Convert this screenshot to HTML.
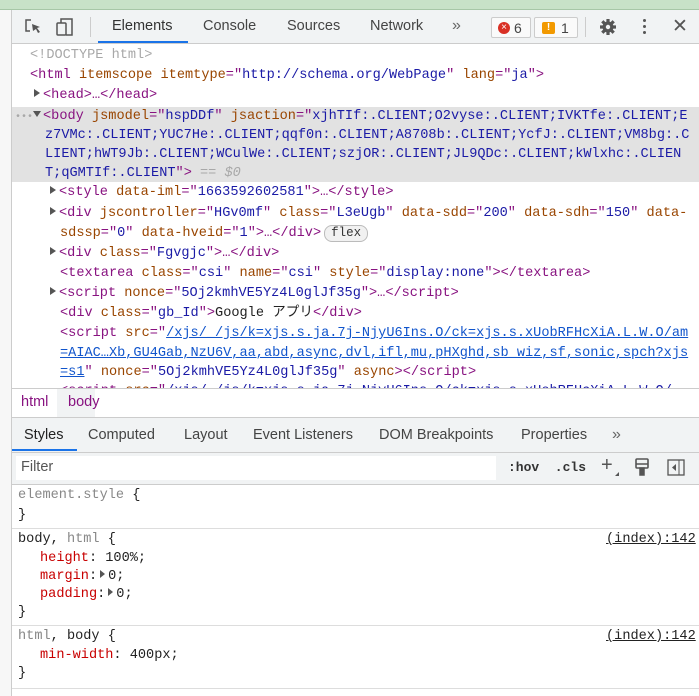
<!DOCTYPE html>
<html><head><meta charset="utf-8"><style>
*{margin:0;padding:0;box-sizing:border-box}
body{width:699px;height:696px;overflow:hidden;background:#fff;position:relative;font-family:"Liberation Sans","Noto Sans CJK JP",sans-serif}
.abs{position:absolute}
.mono{font-family:"Liberation Mono","Noto Sans CJK JP",monospace;font-size:13.6px;white-space:pre;color:#881280}
.t{color:#881280}.a{color:#994500}.v{color:#1a1aa6}.g{color:#a8a8a8}.k{color:#222}
.l{position:absolute;line-height:19.6px;height:19.6px}
.tri{display:inline-block;width:0;height:0;border-left:6px solid #555;border-top:4px solid transparent;border-bottom:4px solid transparent;margin-right:3px;vertical-align:1px}
.trid{display:inline-block;width:0;height:0;border-top:6px solid #555;border-left:4px solid transparent;border-right:4px solid transparent;margin-right:2px;vertical-align:2px}
.tab{position:absolute;font-size:14.5px;color:#333;top:0}
.u{text-decoration:underline}
</style></head><body>
<div class="abs" style="left:0;top:0;width:699px;height:10px;background:#c8e2c8;border-bottom:1px solid #a7c7a7"></div>
<div class="abs" style="left:0;top:10px;width:12px;height:686px;background:#f7f7f7;border-right:1px solid #ccc"></div>
<!-- toolbar -->
<div class="abs" style="left:12px;top:10px;width:687px;height:34px;background:#f1f3f4;border-bottom:1px solid #ccc">
 <svg class="abs" style="left:12px;top:8px" width="18" height="18" viewBox="0 0 18 18"><path d="M7 2H2v11h4" fill="none" stroke="#555" stroke-width="1.5"/><path d="M8 6l8 3-3 1 3 4-2 1-2-4-3 2z" fill="#555"/></svg>
 <svg class="abs" style="left:44px;top:7px" width="18" height="20" viewBox="0 0 18 20"><rect x="1" y="6" width="9" height="12" rx="1" fill="none" stroke="#555" stroke-width="1.5"/><path d="M5 6V2h11v16h-6" fill="none" stroke="#555" stroke-width="1.5"/></svg>
 <div class="abs" style="left:78px;top:7px;width:1px;height:20px;background:#ccc"></div>
 <div class="tab" style="left:100px;top:8px">Elements</div>
 <div class="abs" style="left:86px;top:31px;width:90px;height:2px;background:#1a73e8"></div>
 <div class="tab" style="left:191px;top:8px;color:#444">Console</div>
 <div class="tab" style="left:275px;top:8px;color:#444">Sources</div>
 <div class="tab" style="left:358px;top:8px;color:#444">Network</div>
 <div class="tab" style="left:440px;top:7px;color:#666;font-size:16px">»</div>
 <div class="abs" style="left:479px;top:7px;width:40px;height:21px;border:1px solid #ccc;border-radius:2px;background:#fafafa"><span class="abs" style="left:6px;top:4px;width:12px;height:12px;border-radius:6px;background:#d93025;color:#fff;font-size:10px;text-align:center;line-height:12px">×</span><span class="abs" style="left:22px;top:2px;font-size:14px;color:#444">6</span></div>
 <div class="abs" style="left:522px;top:7px;width:44px;height:21px;border:1px solid #ccc;border-radius:2px;background:#fafafa"><span class="abs" style="left:7px;top:4px;width:13px;height:12px;border-radius:2px;background:#f29900;color:#fff;font-size:10px;text-align:center;line-height:12px;font-weight:bold">!</span><span class="abs" style="left:26px;top:2px;font-size:14px;color:#444">1</span></div>
 <div class="abs" style="left:573px;top:7px;width:1px;height:20px;background:#ccc"></div>
 <svg class="abs" style="left:587px;top:8px" width="18" height="18" viewBox="0 0 18 18"><g stroke="#555" stroke-width="3.2"><path d="M9 1v16M1 9h16M3.3 3.3l11.4 11.4M14.7 3.3L3.3 14.7"/></g><circle cx="9" cy="9" r="5.5" fill="#555"/><circle cx="9" cy="9" r="2.2" fill="#f1f3f4"/></svg>
 <div class="abs" style="left:631px;top:9px;width:3px;height:3px;background:#555;border-radius:2px;box-shadow:0 6px #555,0 12px #555"></div>
 <div class="tab" style="left:660px;top:5px;color:#555;font-size:19px">✕</div>
</div>
<!-- elements tree -->
<div class="abs" style="left:12px;top:107px;width:687px;height:75px;background:#e2e2e2"></div>
<div class="mono">
<div class="l g" style="left:30px;top:46px">&lt;!DOCTYPE html&gt;</div>
<div class="l" style="left:30px;top:66px">&lt;html <span class="a">itemscope itemtype</span><span class="t">="</span><span class="v">http://schema.org/WebPage</span><span class="t">"</span> <span class="a">lang</span>="<span class="v">ja</span>"&gt;</div>
<div class="l" style="left:34px;top:86px"><span class="tri"></span>&lt;head&gt;…&lt;/head&gt;</div>
<div class="l" style="left:15px;top:107px"><span class="g" style="font-size:10px">•••</span><span class="trid"></span>&lt;body <span class="a">jsmodel</span>="<span class="v">hspDDf</span>" <span class="a">jsaction</span>="<span class="v">xjhTIf:.CLIENT;O2vyse:.CLIENT;IVKTfe:.CLIENT;E</span></div>
<div class="l v" style="left:45px;top:126px">z7VMc:.CLIENT;YUC7He:.CLIENT;qqf0n:.CLIENT;A8708b:.CLIENT;YcfJ:.CLIENT;VM8bg:.C</div>
<div class="l v" style="left:45px;top:145px">LIENT;hWT9Jb:.CLIENT;WCulWe:.CLIENT;szjOR:.CLIENT;JL9QDc:.CLIENT;kWlxhc:.CLIEN</div>
<div class="l" style="left:45px;top:164px"><span class="v">T;qGMTIf:.CLIENT</span>"&gt; <span class="g">== <i>$0</i></span></div>
<div class="l" style="left:50px;top:183px"><span class="tri"></span>&lt;style <span class="a">data-iml</span>="<span class="v">1663592602581</span>"&gt;…&lt;/style&gt;</div>
<div class="l" style="left:50px;top:204px"><span class="tri"></span>&lt;div <span class="a">jscontroller</span>="<span class="v">HGv0mf</span>" <span class="a">class</span>="<span class="v">L3eUgb</span>" <span class="a">data-sdd</span>="<span class="v">200</span>" <span class="a">data-sdh</span>="<span class="v">150</span>" <span class="a">data-</span></div>
<div class="l" style="left:60px;top:224px"><span class="a">sdssp</span>="<span class="v">0</span>" <span class="a">data-hveid</span>="<span class="v">1</span>"&gt;…&lt;/div&gt;<span style="display:inline-block;margin-left:3px;border:1px solid #bbb;border-radius:8px;background:#f1f1f1;color:#333;padding:0 6px;line-height:15px;font-size:12.5px">flex</span></div>
<div class="l" style="left:50px;top:244px"><span class="tri"></span>&lt;div <span class="a">class</span>="<span class="v">Fgvgjc</span>"&gt;…&lt;/div&gt;</div>
<div class="l" style="left:60px;top:264px">&lt;textarea <span class="a">class</span>="<span class="v">csi</span>" <span class="a">name</span>="<span class="v">csi</span>" <span class="a">style</span>="<span class="v">display:none</span>"&gt;&lt;/textarea&gt;</div>
<div class="l" style="left:50px;top:284px"><span class="tri"></span>&lt;script <span class="a">nonce</span>="<span class="v">5Oj2kmhVE5Yz4L0glJf35g</span>"&gt;…&lt;/script&gt;</div>
<div class="l" style="left:60px;top:304px">&lt;div <span class="a">class</span>="<span class="v">gb_Id</span>"&gt;<span class="k">Google アプリ</span>&lt;/div&gt;</div>
<div class="l" style="left:60px;top:324px">&lt;script <span class="a">src</span>="<span class="u" style="color:#1155cc">/xjs/_/js/k=xjs.s.ja.7j-NjyU6Ins.O/ck=xjs.s.xUobRFHcXiA.L.W.O/am</span></div>
<div class="l u" style="left:60px;top:344px;color:#1155cc">=AIAC…Xb,GU4Gab,NzU6V,aa,abd,async,dvl,ifl,mu,pHXghd,sb_wiz,sf,sonic,spch?xjs</div>
<div class="l" style="left:60px;top:363px"><span class="u" style="color:#1155cc">=s1</span>" <span class="a">nonce</span>="<span class="v">5Oj2kmhVE5Yz4L0glJf35g</span>" <span class="a">async</span>&gt;&lt;/script&gt;</div>
<div class="l" style="left:60px;top:382px">&lt;script <span class="a">src</span>="<span class="v">/xjs/_/js/k=xjs.s.ja.7j-NjyU6Ins.O/ck=xjs.s.xUobRFHcXiA.L.W.O/</span></div>
</div>
<!-- breadcrumb -->
<div class="abs" style="left:12px;top:388px;width:687px;height:30px;background:#fff;border-top:1px solid #ccc;border-bottom:1px solid #ccc">
 <span class="abs" style="left:9px;top:5px;font-size:14.5px;color:#881280">html</span>
 <span class="abs" style="left:45px;top:0;width:38px;height:28px;background:#f1f3f4"></span>
 <span class="abs" style="left:56px;top:5px;font-size:14.5px;color:#881280">body</span>
</div>
<!-- styles tabs -->
<div class="abs" style="left:12px;top:418px;width:687px;height:35px;background:#f1f3f4;border-bottom:1px solid #ccc">
 <div class="tab" style="left:12px;top:9px;color:#222">Styles</div>
 <div class="abs" style="left:0;top:31px;width:65px;height:2px;background:#1a73e8"></div>
 <div class="tab" style="left:76px;top:9px;color:#444">Computed</div>
 <div class="tab" style="left:172px;top:9px;color:#444">Layout</div>
 <div class="tab" style="left:241px;top:9px;color:#444">Event Listeners</div>
 <div class="tab" style="left:367px;top:9px;color:#444">DOM Breakpoints</div>
 <div class="tab" style="left:509px;top:9px;color:#444">Properties</div>
 <div class="tab" style="left:600px;top:8px;color:#666;font-size:16px">»</div>
</div>
<div class="abs" style="left:12px;top:453px;width:687px;height:32px;background:#f1f3f4;border-bottom:1px solid #ccc">
 <div class="abs" style="left:4px;top:3px;width:480px;height:24px;background:#fff"></div>
 <div class="tab" style="left:9px;top:6px;color:#555">Filter</div>
 <div class="abs mono" style="left:496px;top:7px;color:#333;font-weight:bold;font-size:13px">:hov  .cls</div>
 <div class="abs" style="left:589px;top:1px;font-size:20px;color:#555">+</div>
 <div class="abs" style="left:603px;top:19px;width:0;height:0;border-left:4px solid transparent;border-bottom:4px solid #555"></div>
 <svg class="abs" style="left:623px;top:5px" width="14" height="18" viewBox="0 0 14 18"><rect x="1" y="1" width="12" height="9" rx="1" fill="none" stroke="#555" stroke-width="1.6"/><path d="M1 6h12M5 10h4v7H5z" stroke="#555" stroke-width="1.5" fill="#555"/></svg>
 <svg class="abs" style="left:655px;top:6px" width="18" height="17" viewBox="0 0 18 17"><rect x="1" y="1" width="16" height="15" fill="none" stroke="#555" stroke-width="1.3"/><path d="M12 1v15" stroke="#555"/><path d="M9 5v7L5 8.5z" fill="#555"/></svg>
</div>
<!-- rules -->
<div class="mono" style="color:#222">
<div class="l" style="left:18px;top:486px"><span class="g" style="color:#888">element.style</span> {</div>
<div class="l" style="left:18px;top:506px">}</div>
<div class="abs" style="left:12px;top:528px;width:687px;height:1px;background:#ddd"></div>
<div class="l" style="left:18px;top:530px">body, <span style="color:#888">html</span> {</div>
<div class="l u" style="left:606px;top:530px">(index):142</div>
<div class="l" style="left:40px;top:549px"><span style="color:#c80000">height</span>: 100%;</div>
<div class="l" style="left:40px;top:567px"><span style="color:#c80000">margin</span>:<span class="tri" style="border-left-width:5px;margin:0 3px"></span>0;</div>
<div class="l" style="left:40px;top:585px"><span style="color:#c80000">padding</span>:<span class="tri" style="border-left-width:5px;margin:0 3px"></span>0;</div>
<div class="l" style="left:18px;top:603px">}</div>
<div class="abs" style="left:12px;top:625px;width:687px;height:1px;background:#ddd"></div>
<div class="l" style="left:18px;top:627px"><span style="color:#888">html</span>, body {</div>
<div class="l u" style="left:606px;top:627px">(index):142</div>
<div class="l" style="left:40px;top:646px"><span style="color:#c80000">min-width</span>: 400px;</div>
<div class="l" style="left:18px;top:664px">}</div>
<div class="abs" style="left:12px;top:688px;width:687px;height:1px;background:#ddd"></div>
</div>
</body></html>
